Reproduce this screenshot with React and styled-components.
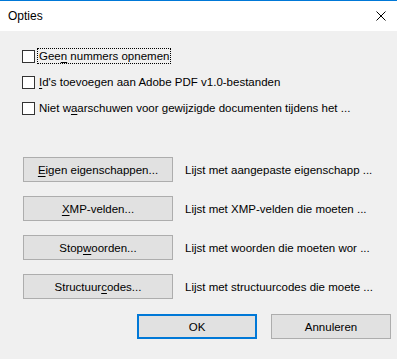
import React from "react";
import styled, { createGlobalStyle } from "styled-components";

const GlobalStyle = createGlobalStyle`
  html, body {
    margin: 0;
    padding: 0;
    background: #f0f0f0;
  }
  body {
    font-family: "Liberation Sans", "Noto Sans", Arial, sans-serif;
    font-size: 11.5px;
    color: #000;
  }
`;

const Window = styled.div`
  width: 397px;
  height: 359px;
  box-sizing: border-box;
  border-top: 1px solid #0078d7;
  background: #f0f0f0;
  display: flex;
  flex-direction: column;
  overflow: hidden;
`;

const TitleBar = styled.div`
  height: 30px;
  background: #fff;
  display: flex;
  align-items: center;
  justify-content: space-between;
  padding-left: 8px;
  padding-right: 11px;
  font-size: 12px;
`;

const CloseButton = styled.div`
  width: 10px;
  height: 10px;
  display: flex;
`;

const Body = styled.div`
  display: flex;
  flex-direction: column;
  padding: 17px 0 0 22px;
`;

const CheckList = styled.div`
  display: flex;
  flex-direction: column;
  gap: 10px;
`;

const CheckRow = styled.div`
  display: flex;
  align-items: center;
  height: 16px;
  gap: 2px;
`;

const Box = styled.span`
  width: 11px;
  height: 11px;
  border: 1px solid #333;
  background: #fff;
  flex: none;
`;

const CheckLabel = styled.span`
  padding: 0 1px;
  line-height: 14px;
  border: 1px dotted ${(p) => (p.$focused ? "#000" : "transparent")};
  white-space: nowrap;
`;

const Key = styled.u`
  text-decoration: underline;
  text-underline-offset: 2px;
`;

const ActionList = styled.div`
  display: flex;
  flex-direction: column;
  gap: 14px;
  margin-top: 41px;
  margin-left: 1px;
`;

const ActionRow = styled.div`
  display: flex;
  align-items: center;
  gap: 12px;
`;

const Button = styled.button`
  width: ${(p) => p.$w || 150}px;
  height: 25px;
  box-sizing: border-box;
  background: #e1e1e1;
  border: ${(p) => (p.$default ? "2px solid #0078d7" : "1px solid #adadad")};
  font: inherit;
  color: #000;
  padding: 0;
  display: flex;
  align-items: center;
  justify-content: center;
`;

const Description = styled.span`
  white-space: nowrap;
`;

const Footer = styled.div`
  display: flex;
  justify-content: flex-end;
  gap: 14px;
  margin-top: 15px;
  padding-right: 6px;
`;

const CloseIcon = () => (
  <svg width="10" height="10" viewBox="0 0 10 10">
    <path d="M0.5 0.5L9.5 9.5M9.5 0.5L0.5 9.5" stroke="#000" strokeWidth="1" fill="none" />
  </svg>
);

const options = [
  { pre: "Gee", key: "n", post: " nummers opnemen", focused: true },
  { pre: "", key: "I", post: "d's toevoegen aan Adobe PDF v1.0-bestanden" },
  { pre: "Niet w", key: "a", post: "arschuwen voor gewijzigde documenten tijdens het ..." },
];

const actions = [
  { pre: "", key: "E", post: "igen eigenschappen...", text: "Lijst met aangepaste eigenschapp ..." },
  { pre: "", key: "X", post: "MP-velden...", text: "Lijst met XMP-velden die moeten ..." },
  { pre: "Stop", key: "w", post: "oorden...", text: "Lijst met woorden die moeten wor ..." },
  { pre: "Structuur", key: "c", post: "odes...", text: "Lijst met structuurcodes die moete ..." },
];

export default function App() {
  return (
    <>
      <GlobalStyle />
      <Window>
        <TitleBar>
          <span>Opties</span>
          <CloseButton>
            <CloseIcon />
          </CloseButton>
        </TitleBar>
        <Body>
          <CheckList>
            {options.map((o, i) => (
              <CheckRow key={i}>
                <Box />
                <CheckLabel $focused={o.focused}>
                  {o.pre}
                  <Key>{o.key}</Key>
                  {o.post}
                </CheckLabel>
              </CheckRow>
            ))}
          </CheckList>
          <ActionList>
            {actions.map((a, i) => (
              <ActionRow key={i}>
                <Button>
                  <span>
                    {a.pre}
                    <Key>{a.key}</Key>
                    {a.post}
                  </span>
                </Button>
                <Description>{a.text}</Description>
              </ActionRow>
            ))}
          </ActionList>
          <Footer>
            <Button $w={120} $default>OK</Button>
            <Button $w={120}>Annuleren</Button>
          </Footer>
        </Body>
      </Window>
    </>
  );
}
